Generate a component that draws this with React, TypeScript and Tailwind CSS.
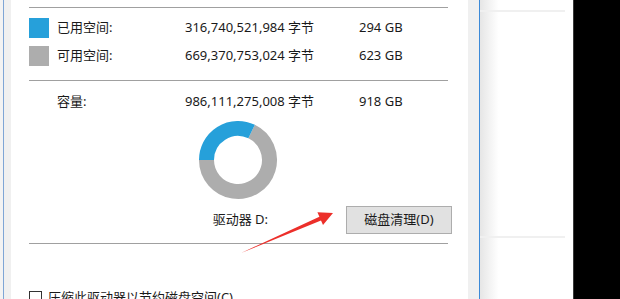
import React from 'react';

const FONT = { fontFamily: '"Segoe UI", "Noto Sans", "Noto Sans CJK SC", sans-serif' };

// Ring arc path from angle a0 to a1 (degrees, clockwise from 12 o'clock)
function arc(cx: number, cy: number, r: number, a0: number, a1: number) {
  const p = (a: number) => {
    const t = ((a - 90) * Math.PI) / 180;
    return [cx + r * Math.cos(t), cy + r * Math.sin(t)];
  };
  const [x0, y0] = p(a0);
  const [x1, y1] = p(a1);
  const large = a1 - a0 > 180 ? 1 : 0;
  return `M ${x0} ${y0} A ${r} ${r} 0 ${large} 1 ${x1} ${y1}`;
}

function Row({ color, label, bytes, size }: { color?: string; label: string; bytes: string; size: string }) {
  return (
    <div className="flex items-center h-[20px]">
      <div className="w-[20px] h-[20px]" style={color ? { background: color } : undefined} />
      <div className="ml-[8px] w-[128px]">{label}</div>
      <div className="w-[174px]">{bytes}</div>
      <div>{size}</div>
    </div>
  );
}

export default function App() {
  const used = 316740521984;
  const total = 986111275008;
  const usedDeg = (used / total) * 360;
  const start = 270;

  return (
    <div className="relative w-[620px] h-[299px] flex overflow-hidden bg-white text-[13px] text-[#1a1a1a]" style={FONT}>
      {/* left window edge */}
      <div className="flex w-[11px] h-full bg-[#f0f0f0]">
        <div className="w-[3px] bg-[#f3f3f3]" />
        <div className="w-px bg-[#7fa6d6]" />
      </div>

      {/* properties content */}
      <div className="w-[457px] h-full pl-[18px] pt-[7px]">
        <div className="w-[419px] h-px bg-[#a0a0a0]" />
        <div className="mt-[10px] flex flex-col gap-[8px]">
          <Row color="#26a0da" label="已用空间:" bytes="316,740,521,984 字节" size="294 GB" />
          <Row color="#adadad" label="可用空间:" bytes="669,370,753,024 字节" size="623 GB" />
        </div>
        <div className="mt-[14px] w-[419px] h-px bg-[#a0a0a0]" />
        <div className="mt-[11px]">
          <Row label="容量:" bytes="986,111,275,008 字节" size="918 GB" />
        </div>
        <div className="mt-[8px] ml-[169px] w-[80px] h-[80px]">
          <svg width="80" height="80" viewBox="0 0 80 80">
            <path d={arc(40, 40, 31.5, start + usedDeg - 360, start - 0.01)} fill="none" stroke="#adadad" strokeWidth="15" />
            <path d={arc(40, 40, 31.5, start, start + usedDeg)} fill="none" stroke="#26a0da" strokeWidth="15" />
          </svg>
        </div>
        <div className="mt-[6px] flex items-center h-[28px]">
          <div className="w-[239px] text-right">驱动器 D:</div>
          <button className="ml-[78px] w-[106px] h-[28px] bg-[#e1e1e1] border border-[#adadad] text-[13px] text-[#1a1a1a]" style={FONT}>
            磁盘清理(D)
          </button>
        </div>
        <div className="mt-[9px] w-[419px] h-px bg-[#a0a0a0]" />
        <div className="mt-[47px] flex items-start">
          <div className="w-[13px] h-[13px] border border-[#333] bg-white" />
          <div className="ml-[6px] -mt-[3px]">压缩此驱动器以节约磁盘空间(C)</div>
        </div>
      </div>

      {/* window behind */}
      <div className="w-[11px] h-full bg-[#f0f0f0]" />
      <div className="w-px h-full bg-[#3c8ad8]" />
      <div className="relative w-[93px] h-full bg-gradient-to-r from-[#e6e6e6] via-white via-20% to-white">
        <div className="mt-[10px] w-[85px] h-[2px] bg-[#f0f0f0]" />
        <div className="mt-[224px] w-[85px] h-[2px] bg-[#f0f0f0]" />
      </div>
      <div className="w-px h-full bg-[#3a3a3a]" />
      <div className="flex-1 h-full bg-black" />

      {/* annotation arrow */}
      <svg className="absolute left-0 top-0 pointer-events-none" width="620" height="299" viewBox="0 0 620 299">
        <polygon
          points="241,253 319.4,216.8 317.4,212.2 333,213 323,225 321,220.4"
          fill="#ec2f2a"
        />
      </svg>
    </div>
  );
}
